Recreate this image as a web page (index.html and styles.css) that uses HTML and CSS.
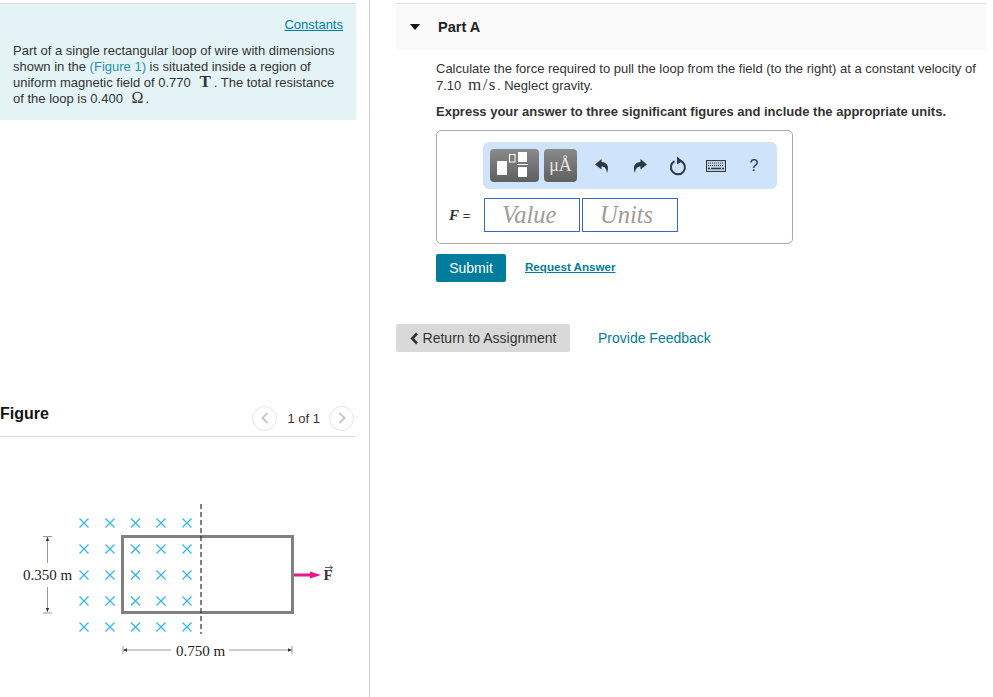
FILE: index.html
```html
<!DOCTYPE html>
<html lang="en">
<head>
  <meta charset="UTF-8">
  <meta name="viewport" content="width=device-width, initial-scale=1.0">
  <title>Part A</title>
  <link rel="stylesheet" href="styles.css">
</head>
<body>
  <div class="page">
    <div class="left">
      <div class="info">
        <div class="constants"><a href="#">Constants</a></div>
        <p>Part of a single rectangular loop of wire with dimensions shown in the <span class="fig-link">(Figure 1)</span> is situated inside a region of uniform magnetic field of 0.770 <span class="math unit">T</span>. The total resistance of the loop is 0.400 <span class="math unit ohm">Ω</span>.</p>
      </div>

      <div class="figure-head">
        <h2>Figure</h2>
        <div class="pager">
          <span class="pager-btn">
            <svg width="8" height="12" viewBox="0 0 8 12"><path d="M6.5 1 L1.5 6 L6.5 11" fill="none" stroke="#c4c8cc" stroke-width="2"/></svg>
          </span>
          <span class="pager-text">1 of 1</span>
          <span class="pager-btn">
            <svg width="8" height="12" viewBox="0 0 8 12"><path d="M1.5 1 L6.5 6 L1.5 11" fill="none" stroke="#c4c8cc" stroke-width="2"/></svg>
          </span>
        </div>
      </div>

      <!-- viewBox y starts at 437 so the numbers read like the page -->
      <svg class="diagram" width="356" height="240" viewBox="0 437 356 240">
        <defs>
          <g id="x"><path d="M-4.5 -4.5 L4.5 4.5 M4.5 -4.5 L-4.5 4.5" stroke="#2fb5ea" stroke-width="1.2" fill="none"/></g>
          <g id="xrow">
            <use href="#x" x="84"/><use href="#x" x="110"/><use href="#x" x="135.5"/><use href="#x" x="161"/><use href="#x" x="187"/>
          </g>
        </defs>
        <use href="#xrow" y="523"/>
        <use href="#xrow" y="549"/>
        <use href="#xrow" y="575"/>
        <use href="#xrow" y="601"/>
        <use href="#xrow" y="627"/>
        <rect x="122.5" y="536.5" width="170" height="76" fill="none" stroke="#808080" stroke-width="3"/>
        <path d="M201 504 V634" stroke="#333" stroke-width="1.2" stroke-dasharray="5 3" fill="none"/>
        <!-- height dimension -->
        <path d="M43 536.5 H52 M43 613 H52 M47.5 537 V563 M47.5 587 V612" stroke="#999" stroke-width="1" fill="none"/>
        <path d="M47.5 537 L45.8 541 H49.2 Z M47.5 612 L45.8 608 H49.2 Z" fill="#333"/>
        <text class="dim" x="23" y="580">0.350 m</text>
        <!-- width dimension -->
        <path d="M123 646 V654 M292 646 V654 M123 650 H171 M229 650 H292" stroke="#999" stroke-width="1" fill="none"/>
        <path d="M123 650 L127 648.3 V651.7 Z M292 650 L288 648.3 V651.7 Z" fill="#333"/>
        <text class="dim" x="176" y="656">0.750 m</text>
        <!-- force -->
        <path d="M294 575 H312" stroke="#e6178c" stroke-width="3" fill="none"/>
        <path d="M321 575 L310 571.5 V578.5 Z" fill="#e6178c"/>
        <path d="M325 567.5 H332 M330 565.5 L332.5 567.5 L330 569.5" stroke="#333" stroke-width="0.8" fill="none"/>
        <text class="force" x="323.5" y="580">F</text>
      </svg>
    </div>

    <div class="right">
      <div class="part-head">
        <span class="caret"></span>
        <h3>Part A</h3>
      </div>
      <div class="part-body">
        <p class="question">Calculate the force required to pull the loop from the field (to the right) at a constant velocity of 7.10 <span class="math speed">m/s</span>. Neglect gravity.</p>
        <p class="hint">Express your answer to three significant figures and include the appropriate units.</p>

        <div class="answer-box">
          <div class="toolbar">
            <span class="tool-btn wide">
              <svg width="49" height="33" viewBox="0 0 49 33">
                <rect x="7" y="12" width="10" height="14" fill="#fff"/>
                <rect x="19.5" y="5.5" width="5.5" height="7.5" fill="none" stroke="#fff" stroke-width="1"/>
                <rect x="28" y="3" width="9" height="10" fill="#fff"/>
                <rect x="27" y="15" width="11" height="1" fill="#fff"/>
                <rect x="28" y="18" width="9" height="10" fill="#fff"/>
              </svg>
            </span>
            <span class="tool-btn unit-btn">μÅ</span>
            <div class="tools">
              <span class="tool">
                <svg width="16" height="16" viewBox="0 0 16 16"><path d="M7.5 1 L1 6.5 L7.5 11.5 V8.5 C10.5 8.5 12.5 10.5 13 15 C15.5 9 13.5 4.2 7.5 4 Z" fill="#2d3a45"/></svg>
              </span>
              <span class="tool">
                <svg width="16" height="16" viewBox="0 0 16 16"><path d="M8.5 1 L15 6.5 L8.5 11.5 V8.5 C5.5 8.5 3.5 10.5 3 15 C0.5 9 2.5 4.2 8.5 4 Z" fill="#2d3a45"/></svg>
              </span>
              <span class="tool">
                <svg width="18" height="20" viewBox="0 0 18 20"><path d="M5.5 5.2 A7 7 0 1 0 12 5" fill="none" stroke="#2d3a45" stroke-width="2"/><path d="M8 0.5 L13.5 5 L8 8.5 Z" fill="#2d3a45"/></svg>
              </span>
              <span class="tool">
                <svg width="20" height="12" viewBox="0 0 20 12">
                  <rect x="0.5" y="0.5" width="19" height="11" fill="#c3d0de" stroke="#2d3a45"/>
                  <path d="M2 3 H18 M2 5.5 H18" stroke="#2d3a45" stroke-width="1.2" stroke-dasharray="1 1"/>
                  <path d="M2 8.5 H18" stroke="#2d3a45" stroke-width="1.5" stroke-dasharray="2 1 10 1 2"/>
                </svg>
              </span>
              <span class="tool help">?</span>
            </div>
          </div>
          <div class="answer-row">
            <span class="answer-label"><span class="var">F</span> =</span>
            <input class="math-input" type="text" placeholder="Value">
            <input class="math-input" type="text" placeholder="Units">
          </div>
        </div>

        <div class="actions">
          <button class="submit">Submit</button>
          <a class="request" href="#">Request Answer</a>
        </div>
      </div>

      <div class="footer-links">
        <button class="return">
          <svg width="9" height="13" viewBox="0 0 9 13"><path d="M7 1.5 L2.2 6.5 L7 11.5" fill="none" stroke="#333" stroke-width="2.6"/></svg>
          Return to Assignment
        </button>
        <a class="feedback" href="#">Provide Feedback</a>
      </div>
    </div>
  </div>
</body>
</html>
```

FILE: styles.css
```css
* { box-sizing: border-box; }
body {
  margin: 0; padding: 0;
  font-family: "Liberation Sans", Arial, sans-serif;
  font-size: 13px;
  color: #333;
  background: #fff;
}
a { color: #007c9c; }
p { margin: 0; }

.page { display: flex; min-height: 100vh; width: 986px; overflow: hidden; height: 697px; }
.left { width: 370px; border-right: 1px solid #ccc; padding-top: 3px; flex: none; }
.right { flex: 1; padding: 3px 0 0 26px; }

/* left column */
.info {
  width: 356px; height: 117px;
  background: #e4f4f6;
  border-top: 1px solid #ddd;
  padding: 13px 13px 0 13px;
}
.constants { text-align: right; line-height: 16px; margin-bottom: 10px; }
.info p { line-height: 16px; }
.fig-link { color: #2b8fb0; }
.math { font-family: "Liberation Serif", serif; }
.unit { font-weight: bold; font-size: 17px; line-height: 0; margin: 0 3px 0 5px; }
.ohm { font-weight: normal; font-size: 16px; margin-right: 2px; }

.figure-head {
  width: 356px; height: 37px;
  margin-top: 280px;
  border-bottom: 1px solid #ddd;
  display: flex; justify-content: space-between; align-items: center;
}
.figure-head h2 { margin: 0 0 8px 0; font-size: 16px; color: #111; }
.pager { display: flex; align-items: center; margin: 0 2px 4px 0; padding-top: 4px; }
.pager-btn {
  width: 25px; height: 25px;
  border: 1px solid #e6e6e6; border-radius: 50%;
  display: flex; align-items: center; justify-content: center;
}
.pager-text { margin: 0 9px 0 10px; }
.diagram { display: block; }
.dim { font-family: "Liberation Serif", serif; font-size: 15px; fill: #222; }
.force { font-family: "Liberation Serif", serif; font-size: 15px; font-weight: bold; fill: #333; }

/* right column */
.part-head {
  height: 47px;
  background: #f9f9f9;
  border-top: 1px solid #ddd;
  display: flex; align-items: center;
  padding-left: 14px;
}
.caret {
  width: 0; height: 0;
  border-left: 5.5px solid transparent;
  border-right: 5.5px solid transparent;
  border-top: 6px solid #111;
}
.part-head h3 { margin: 0 0 0 18px; font-size: 14.5px; color: #222; }

.part-body { padding: 10px 0 0 40px; }
.question { line-height: 17px; }
.speed { font-size: 17px; letter-spacing: 1.5px; line-height: 0; margin: 0 0 0 3px; }
.hint { font-weight: bold; line-height: 17px; margin-top: 9px; }

.answer-box {
  width: 357px; height: 114px;
  margin-top: 10px;
  border: 1px solid #aaa; border-radius: 5px;
  padding: 11px 0 0 46px;
}
.toolbar {
  width: 294px; height: 47px;
  background: #cfe4fb;
  border-radius: 6px;
  display: flex; align-items: center;
  padding-left: 7px;
}
.tool-btn {
  height: 33px;
  border-radius: 4px;
  background: linear-gradient(#8a8a8a, #5f5f5f);
  display: flex; align-items: center; justify-content: center;
}
.tool-btn.wide { width: 49px; }
.unit-btn {
  width: 33px; margin-left: 5px;
  font-family: "Liberation Serif", serif; font-size: 18px; color: #e4e4e4;
}
.tools { display: flex; margin-left: 6px; }
.tool { width: 38px; display: flex; align-items: center; justify-content: center; }
.help { font-size: 16px; color: #2d3a45; }

.answer-row { display: flex; align-items: center; margin-top: 9px; margin-left: -34px; }
.answer-label { width: 35px; font-size: 13px; }
.var { font-family: "Liberation Serif", serif; font-style: italic; font-weight: bold; font-size: 15px; }
.math-input {
  width: 96px; height: 34px;
  border: 1px solid #3367d1;
  margin-right: 2px;
  padding: 0 0 0 17px;
  font-family: "Liberation Serif", serif; font-style: italic; font-size: 24.5px;
  outline: none;
  background: #fff;
}
.math-input::placeholder { color: #a09c98; opacity: 1; }

.actions { display: flex; align-items: center; margin-top: 10px; }
.submit {
  width: 70px; height: 28px;
  background: #007c9c; color: #fff;
  border: none; border-radius: 2px;
  font-family: inherit; font-size: 14px;
}
.request { margin-left: 19px; font-size: 11.6px; font-weight: bold; margin-top: -3px; }

.footer-links { display: flex; align-items: center; margin-top: 42px; font-size: 14px; }
.return {
  width: 174px; height: 28px;
  background: #d9d9d9; color: #333;
  border: none; border-radius: 2px;
  font-family: inherit; font-size: 14px;
  padding: 0;
  display: flex; align-items: center; justify-content: center; gap: 4px;
}
.feedback { margin-left: 28px; text-decoration: none; }
```
